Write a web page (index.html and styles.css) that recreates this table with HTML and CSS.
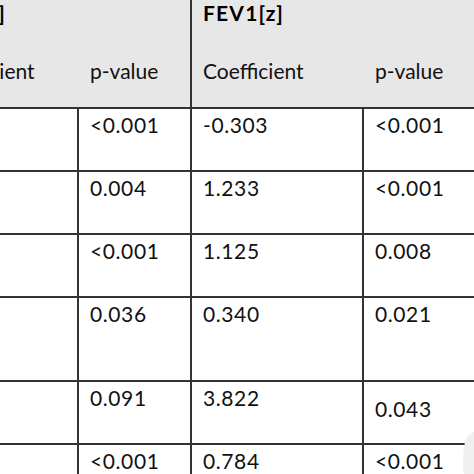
FILE: index.html
```html
<!DOCTYPE html>
<html>
<head>
<meta charset="utf-8">
<link rel="stylesheet" href="styles.css">
</head>
<body>
<div class="sheet">
  <div class="table">
    <div class="cell head group first sep">FVC[z]</div>
    <div class="cell head group">FEV1[z]</div>
    <div class="cell head sub">Coefficient</div>
    <div class="cell head sub sep">p-value</div>
    <div class="cell head sub">Coefficient</div>
    <div class="cell head sub">p-value</div>

    <div class="cell body"></div>
    <div class="cell body">&lt;0.001</div>
    <div class="cell body">-0.303</div>
    <div class="cell body">&lt;0.001</div>

    <div class="cell body"></div>
    <div class="cell body">0.004</div>
    <div class="cell body">1.233</div>
    <div class="cell body">&lt;0.001</div>

    <div class="cell body"></div>
    <div class="cell body">&lt;0.001</div>
    <div class="cell body">1.125</div>
    <div class="cell body">0.008</div>

    <div class="cell body"></div>
    <div class="cell body">0.036</div>
    <div class="cell body">0.340</div>
    <div class="cell body">0.021</div>

    <div class="cell body"></div>
    <div class="cell body">0.091</div>
    <div class="cell body">3.822</div>
    <div class="cell body low">0.043</div>

    <div class="cell body"></div>
    <div class="cell body">&lt;0.001</div>
    <div class="cell body">0.784</div>
    <div class="cell body">&lt;0.001</div>
  </div>
  <svg class="mark" width="12" height="42" viewBox="0 0 12 42"><path d="M4 6 C6 3 9 1 12 0 L12 42 L2 42 C0 32 1 16 4 6 Z" fill="#f0f0f0"/></svg>
</div>
</body>
</html>
```
FILE: styles.css
```css
html, body {
  margin: 0;
  padding: 0;
  background: #fff;
}
body {
  width: 474px;
  height: 474px;
  overflow: hidden;
}
.sheet {
  position: relative;
  width: 474px;
  height: 474px;
  overflow: hidden;
}
.table {
  display: grid;
  grid-template-columns: 156px 113px 172px 156px;
  grid-template-rows: 58px 51px 63px 63px 63px 84px 63px 63px;
  margin-left: -77px;
  width: 597px;
  font-family: Lato, "Open Sans", sans-serif;
  font-size: 21px;
  line-height: 25px;
  color: #111;
}
.cell {
  box-sizing: border-box;
  padding-left: 11px;
  white-space: nowrap;
}
.head {
  background: #e7e7e7;
}
.group {
  grid-column: span 2;
  font-weight: 700;
  letter-spacing: 1.2px;
  color: #000;
  padding-top: 0;
}
.first {
  padding-left: 14px;
}
.sub {
  padding-top: 0;
  border-bottom: 2px solid #333;
}
.sep {
  border-right: 2px solid #333;
}
.body {
  padding-top: 3px;
  letter-spacing: 0.6px;
  border-right: 2px solid #333;
  border-bottom: 2px solid #333;
}
.low {
  padding-top: 14px;
}
.mark {
  position: absolute;
  right: 0;
  bottom: 0;
}
```
